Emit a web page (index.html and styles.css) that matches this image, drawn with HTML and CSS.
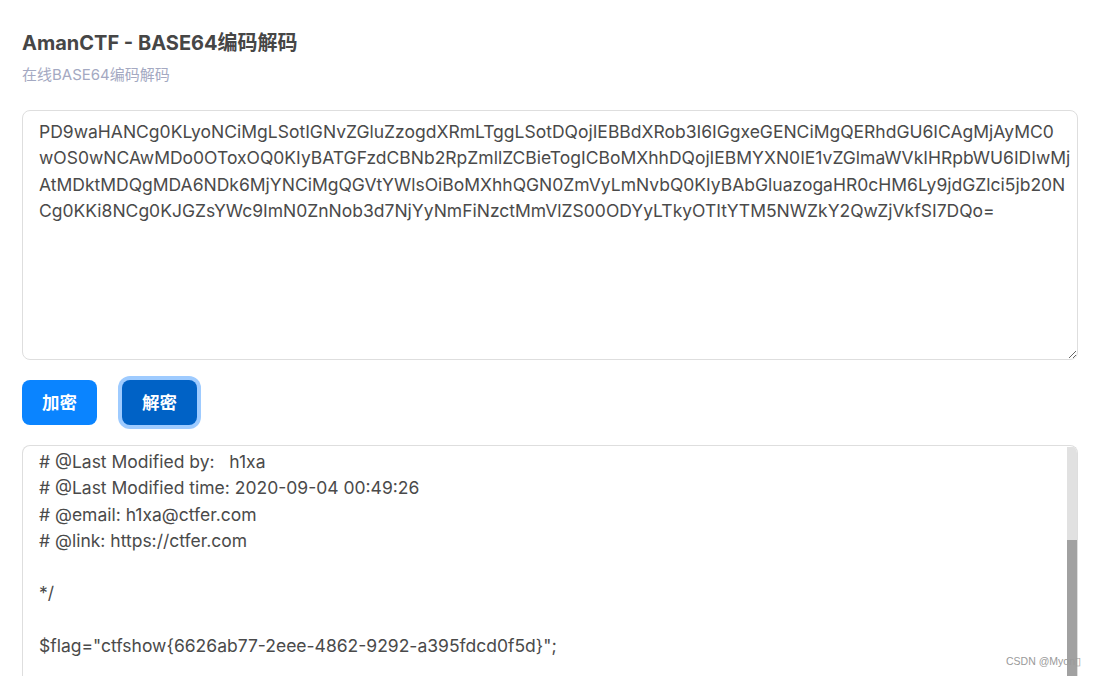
FILE: index.html
```html
<!DOCTYPE html>
<html lang="zh-CN">
<head>
    <meta charset="UTF-8">
    <meta name="viewport" content="width=device-width, initial-scale=1.0">
    <title>AmanCTF - BASE64编码解码</title>
    <link rel="stylesheet" href="styles.css">
</head>
<body>

<div class="page">
    <div class="header">
        <h1 class="title">AmanCTF - BASE64编码解码</h1>
        <p class="subtitle">在线BASE64编码解码</p>
    </div>

    <textarea class="input-box" spellcheck="false">PD9waHANCg0KLyoNCiMgLSotIGNvZGluZzogdXRmLTggLSotDQojIEBBdXRob3I6IGgxeGENCiMgQERhdGU6ICAgMjAyMC0
wOS0wNCAwMDo0OToxOQ0KIyBATGFzdCBNb2RpZmllZCBieTogICBoMXhhDQojIEBMYXN0IE1vZGlmaWVkIHRpbWU6IDIwMj
AtMDktMDQgMDA6NDk6MjYNCiMgQGVtYWlsOiBoMXhhQGN0ZmVyLmNvbQ0KIyBAbGluazogaHR0cHM6Ly9jdGZlci5jb20N
Cg0KKi8NCg0KJGZsYWc9ImN0ZnNob3d7NjYyNmFiNzctMmVlZS00ODYyLTkyOTItYTM5NWZkY2QwZjVkfSI7DQo=</textarea>

    <div class="actions">
        <button class="btn">加密</button>
        <button class="btn btn-active">解密</button>
    </div>

    <div class="output-box">
        <pre class="output-text"># @Last Modified by:   h1xa
# @Last Modified time: 2020-09-04 00:49:26
# @email: h1xa@ctfer.com
# @link: https://ctfer.com

*/

$flag="ctfshow{6626ab77-2eee-4862-9292-a395fdcd0f5d}";

</pre>
        <div class="scrollbar">
            <div class="scroll-thumb"></div>
        </div>
    </div>
</div>

<div class="watermark">CSDN @Myon▯</div>

</body>
</html>
```

FILE: styles.css
```css
html, body {
    margin: 0;
    height: 100%;
    overflow: hidden;
}
body {
    background-color: #fff;
    font-family: Inter, "Noto Sans CJK SC", sans-serif;
    color: #4a4a4a;
}
.page {
    padding: 31px 17px 0 22px;
    display: flex;
    flex-direction: column;
}
.header {
    margin-bottom: 25px;
}
.title {
    margin: 0;
    font-size: 20px;
    font-weight: 700;
    line-height: 24px;
    color: #464646;
}
.subtitle {
    margin: 10px 0 0;
    font-size: 15px;
    line-height: 20px;
    color: #a4a9c2;
}
.input-box {
    box-sizing: border-box;
    width: 100%;
    height: 250px;
    padding: 8px 16px;
    border: 1px solid #dedede;
    border-radius: 8px;
    font-family: Inter, "Noto Sans CJK SC", sans-serif;
    font-size: 17.5px;
    line-height: 26.25px;
    color: #4a4a4a;
    outline: none;
    white-space: pre;
    overflow: hidden;
}
.actions {
    display: flex;
    gap: 25px;
    margin: 20px 0;
}
.btn {
    padding: 12px 20px;
    border: none;
    border-radius: 8px;
    background-color: #0a84ff;
    color: #fff;
    font-family: Inter, "Noto Sans CJK SC", sans-serif;
    font-size: 17.5px;
    font-weight: 700;
    line-height: 21px;
    cursor: pointer;
}
.btn-active {
    background-color: #0062c6;
    box-shadow: 0 0 0 4px #9ecbff;
}
.output-box {
    display: flex;
    height: 260px;
    border: 1px solid #dedede;
    border-bottom: none;
    border-radius: 8px 8px 0 0;
    overflow: hidden;
}
.output-text {
    flex: 1;
    margin: 0;
    padding: 3px 16px 0;
    font-family: Inter, "Noto Sans CJK SC", sans-serif;
    font-size: 17.5px;
    line-height: 26.25px;
    color: #4a4a4a;
}
.scrollbar {
    width: 10px;
    margin-top: 1px;
    display: flex;
    flex-direction: column;
    background-color: #e1e1e1;
}
.scroll-thumb {
    margin-top: 93px;
    flex: 1;
    background-color: #a1a1a1;
}
.watermark {
    position: absolute;
    right: 14px;
    bottom: 9px;
    font-family: "Liberation Sans", sans-serif;
    font-size: 10.5px;
    color: #9a9a9a;
}
```
